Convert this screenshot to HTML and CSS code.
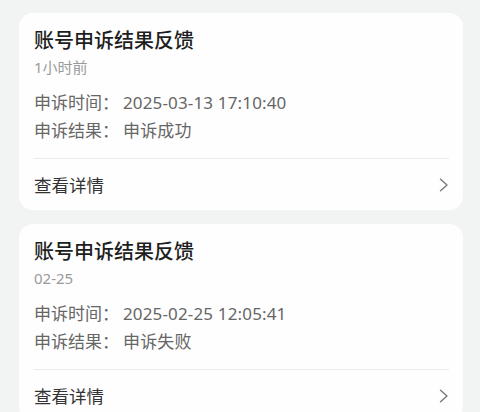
FILE: index.html
```html
<!DOCTYPE html>
<html lang="zh">
<head>
<meta charset="utf-8">
<link rel="stylesheet" href="styles.css">
</head>
<body>
<div class="list">
  <div class="card">
    <div class="title">账号申诉结果反馈</div>
    <div class="sub">1小时前</div>
    <div class="rows">
      <div class="row"><span class="label">申诉时间：</span><span class="val">2025-03-13 17:10:40</span></div>
      <div class="row"><span class="label">申诉结果：</span><span class="val">申诉成功</span></div>
    </div>
    <div class="footer">
      <span class="link">查看详情</span>
      <svg class="chev" width="10" height="14" viewBox="0 0 10 14"><path d="M1.5 1.2 L8 7 L1.5 12.8" fill="none" stroke="#7a7a7a" stroke-width="1.4" stroke-linecap="round" stroke-linejoin="round"/></svg>
    </div>
  </div>
  <div class="card">
    <div class="title">账号申诉结果反馈</div>
    <div class="sub">02-25</div>
    <div class="rows">
      <div class="row"><span class="label">申诉时间：</span><span class="val">2025-02-25 12:05:41</span></div>
      <div class="row"><span class="label">申诉结果：</span><span class="val">申诉失败</span></div>
    </div>
    <div class="footer">
      <span class="link">查看详情</span>
      <svg class="chev" width="10" height="14" viewBox="0 0 10 14"><path d="M1.5 1.2 L8 7 L1.5 12.8" fill="none" stroke="#7a7a7a" stroke-width="1.4" stroke-linecap="round" stroke-linejoin="round"/></svg>
    </div>
  </div>
</div>
</body>
</html>
```
FILE: styles.css
```css
html, body {
  margin: 0;
  padding: 0;
  background: #f2f3f3;
  font-family: "Noto Sans", "Noto Sans CJK SC", sans-serif;
}
.list {
  display: flex;
  flex-direction: column;
  gap: 14px;
  padding: 13px 17px 0 19px;
}
.card {
  background: #fefefe;
  border-radius: 14px;
  padding: 13px 14px 0 15px;
}
.title {
  font-size: 20px;
  line-height: 28px;
  font-weight: 500;
  color: #1e1e1e;
  font-family: "Noto Sans CJK SC", sans-serif;
}
.sub {
  margin-top: 3px;
  font-size: 15px;
  line-height: 21px;
  color: #9a9a9a;
}
.rows {
  margin-top: 10px;
  padding-bottom: 14px;
  border-bottom: 1px solid #ececec;
}
.row {
  display: flex;
  align-items: baseline;
  height: 28px;
  line-height: 28px;
  font-size: 17px;
  color: #666;
}
.label {
  width: 89px;
  flex: none;
  font-family: "Noto Sans CJK SC", sans-serif;
}
.val {
  letter-spacing: 0.15px;
}
.footer {
  height: 51px;
  display: flex;
  align-items: center;
  justify-content: space-between;
}
.link {
  font-size: 17.5px;
  color: #333;
  font-family: "Noto Sans CJK SC", sans-serif;
}
```
